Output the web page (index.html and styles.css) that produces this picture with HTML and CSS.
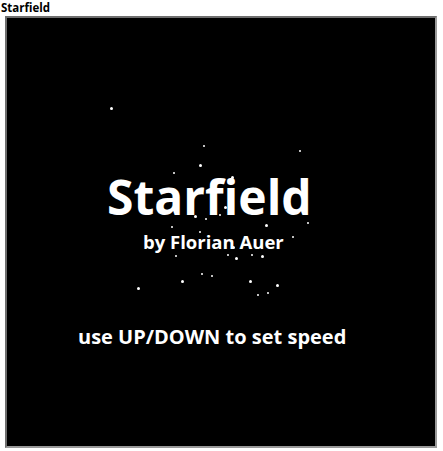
FILE: index.html
```html
<!DOCTYPE html>
<html lang="en">
<head>
  <meta charset="UTF-8">
  <title>Starfield</title>
  <link rel="stylesheet" href="styles.css">
</head>
<body>
  <h1 class="page-title">Starfield</h1>
  <div class="screen" id="screen">
    <div class="title">Starfield</div>
    <div class="byline">by Florian Auer</div>
    <div class="hint">use UP/DOWN to set speed</div>
  </div>

  <script>
    // star positions inside the screen (x, y, diameter)
    const stars = [
      [103, 89, 3], [292, 132, 2], [196, 127, 2], [192, 146, 3], [166, 154, 2],
      [224, 158, 3], [217, 188, 3], [187, 197, 3], [198, 200, 2], [212, 196, 2],
      [164, 208, 2], [258, 206, 3], [300, 204, 2], [192, 213, 2], [225, 228, 3],
      [285, 218, 2], [220, 236, 2], [228, 239, 3], [244, 236, 2], [254, 237, 3],
      [168, 237, 2], [174, 262, 3], [194, 255, 2], [204, 257, 2], [242, 262, 3],
      [269, 266, 3], [130, 269, 3], [250, 276, 2], [260, 274, 2]
    ];

    const screen = document.getElementById('screen');
    stars.forEach(([x, y, d]) => {
      const star = document.createElement('span');
      star.className = 'star';
      star.style.left = x + 'px';
      star.style.top = y + 'px';
      star.style.width = d + 'px';
      star.style.height = d + 'px';
      screen.appendChild(star);
    });
  </script>
</body>
</html>
```

FILE: styles.css
```css
body {
  margin: 0;
  background: #fff;
  font-family: 'Open Sans', 'Noto Sans', sans-serif;
}

.page-title {
  margin: 0;
  padding: 0 0 0 1px;
  font-size: 11.5px;
  font-weight: bold;
  line-height: 15px;
  height: 16px;
  color: #000;
}

.screen {
  position: relative;
  margin-left: 5px;
  width: 428px;
  height: 428px;
  background: #000;
  border: 2px solid #6e6e6e;
  border-right-color: #9a9a9a;
  border-bottom-color: #9a9a9a;
  color: #fff;
  font-weight: bold;
  overflow: hidden;
}

.title {
  padding: 155px 0 0 100px;
  font-size: 48px;
  line-height: 48px;
}

.byline {
  padding: 9px 0 0 136px;
  font-size: 18.5px;
  line-height: 24px;
}

.hint {
  padding: 71px 0 0 71px;
  font-size: 20px;
  line-height: 24px;
}

.star {
  position: absolute;
  background: #fff;
  border-radius: 50%;
}
```
